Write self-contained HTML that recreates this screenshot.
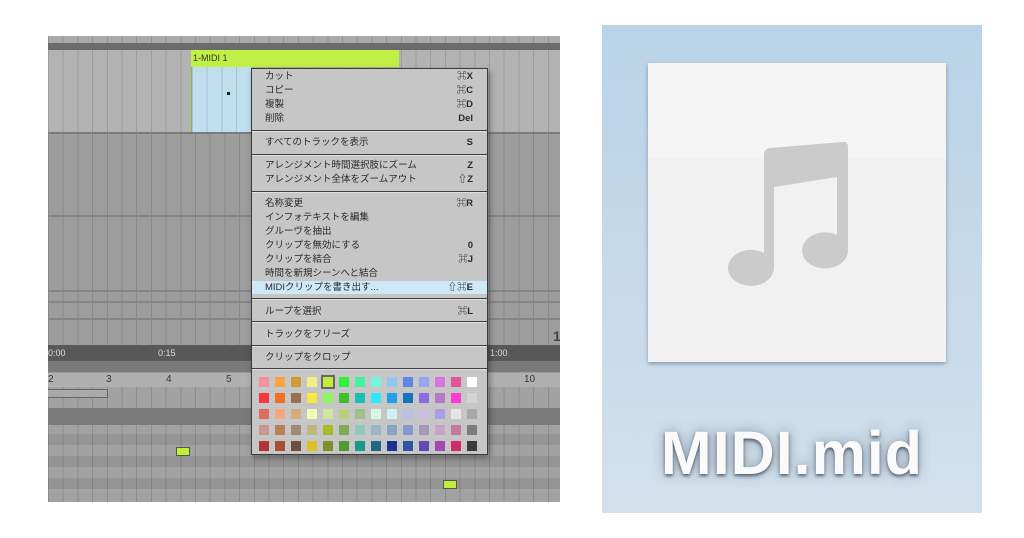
<!DOCTYPE html>
<html><head><meta charset="utf-8"><style>
*{margin:0;padding:0;box-sizing:border-box}
body{width:1024px;height:538px;background:#fff;position:relative;overflow:hidden;font-family:"Liberation Sans","Noto Sans CJK JP",sans-serif}
.a{position:absolute}
.grid{background-image:repeating-linear-gradient(90deg,rgba(0,0,0,.13) 0 1px,transparent 1px 14.7px)}
.menu{left:251px;top:68px;width:237px;height:387px;background:#c6c6c6;border:1.5px solid #3a3a3a;box-shadow:2px 3px 6px rgba(0,0,0,.35);font-size:9.5px;color:#2a2a2a}
.it{position:absolute;left:13px;right:14px;height:14px;line-height:14px}
.it span{position:absolute;right:0;font-weight:bold}
.sep{position:absolute;left:0;right:0;height:2px;background:#3e3e3e;border-bottom:1px solid #e0e0e0}
.sw{position:absolute;width:10px;height:10px}
</style></head><body>
<!-- left panel -->
<div class="a" style="left:48px;top:36px;width:512px;height:466px;background:#9c9c9c;overflow:hidden">
 <div class="a grid" style="left:0;top:0;width:512px;height:7px;background-color:#a9a9a9"></div>
 <div class="a" style="left:0;top:7px;width:512px;height:7px;background:#6b6b6b"></div>
 <div class="a grid" style="left:0;top:14px;width:512px;height:82px;background-color:#b3b3b3"></div>
 <div class="a" style="left:0;top:96px;width:512px;height:2px;background:#7c7c7c"></div>
 <div class="a grid" style="left:0;top:98px;width:512px;height:211px;background-color:#9d9d9d"></div>
 <div class="a" style="left:0;top:179px;width:512px;height:2px;background:#858585"></div>
 <div class="a" style="left:0;top:254px;width:512px;height:2px;background:#858585"></div>
 <div class="a" style="left:0;top:265px;width:512px;height:2px;background:#858585"></div>
 <div class="a" style="left:0;top:282px;width:512px;height:2px;background:#858585"></div>
 <div class="a" style="left:505px;top:292px;font-size:14px;font-weight:bold;color:#444">1</div>
 <div class="a" style="left:0;top:309px;width:512px;height:16px;background:#585858;color:#ddd;font-size:9px;line-height:16px">
  <span class="a" style="left:0">0:00</span><span class="a" style="left:110px">0:15</span><span class="a" style="left:442px">1:00</span></div>
 <div class="a" style="left:0;top:325px;width:512px;height:11px;background:#7a7a7a"></div>
 <div class="a" style="left:0;top:337px;width:512px;height:14px;background:#b0b0b0;font-size:10px;color:#333;line-height:14px">
  <span class="a" style="left:0">2</span><span class="a" style="left:58px">3</span><span class="a" style="left:118px">4</span><span class="a" style="left:178px">5</span><span class="a" style="left:476px">10</span></div>
 <div class="a grid" style="left:0;top:351px;width:512px;height:21px;background-color:#a2a2a2"></div>
 <div class="a" style="left:0;top:353px;width:60px;height:9px;background:#aaa;border:1px solid #666;border-left:none"></div>
 <div class="a" style="left:0;top:372px;width:512px;height:17px;background:#7a7a7a"></div>
 <div class="a grid" style="left:0;top:389px;width:512px;height:77px;background-color:#a2a2a2"></div>
 <div class="a" style="left:0;top:398px;width:512px;height:11px;background:rgba(0,0,0,.08)"></div>
 <div class="a" style="left:0;top:420px;width:512px;height:11px;background:rgba(0,0,0,.08)"></div>
 <div class="a" style="left:0;top:442px;width:512px;height:11px;background:rgba(0,0,0,.08)"></div>
 <div class="a" style="left:128px;top:411px;width:14px;height:9px;background:#c0ec3a;border:1px solid #555"></div>
 <div class="a" style="left:395px;top:444px;width:14px;height:9px;background:#c0ec3a;border:1px solid #555"></div>
 <!-- clip -->
 <div class="a" style="left:143px;top:14px;width:208px;height:17px;background:#c0ef45;font-size:9px;line-height:17px;padding-left:2px;color:#333">1-MIDI 1</div>
 <div class="a" style="left:143px;top:31px;width:60px;height:65px;background:#bfdeee;border-left:1px solid #8ab838;background-image:repeating-linear-gradient(90deg,rgba(0,0,0,.12) 0 1px,transparent 1px 14.7px)"></div>
 <div class="a" style="left:179px;top:56px;width:3px;height:3px;background:#222"></div>
</div>
<!-- menu -->
<div class="a menu">
 <div class="it" style="top:1px">カット<span>⌘X</span></div>
 <div class="it" style="top:15px">コピー<span>⌘C</span></div>
 <div class="it" style="top:29px">複製<span>⌘D</span></div>
 <div class="it" style="top:43px">削除<span>Del</span></div>
 <div class="sep" style="top:61px"></div>
 <div class="it" style="top:67px">すべてのトラックを表示<span>S</span></div>
 <div class="sep" style="top:85px"></div>
 <div class="it" style="top:90px">アレンジメント時間選択肢にズーム<span>Z</span></div>
 <div class="it" style="top:104px">アレンジメント全体をズームアウト<span>⇧Z</span></div>
 <div class="sep" style="top:122px"></div>
 <div class="it" style="top:128px">名称変更<span>⌘R</span></div>
 <div class="it" style="top:142px">インフォテキストを編集</div>
 <div class="it" style="top:156px">グルーヴを抽出</div>
 <div class="it" style="top:170px">クリップを無効にする<span>0</span></div>
 <div class="it" style="top:184px">クリップを結合<span>⌘J</span></div>
 <div class="it" style="top:198px">時間を新規シーンへと結合</div>
 <div class="a" style="left:0;right:0;top:212px;height:13px;background:#cde8f6"></div>
 <div class="it" style="top:212px">MIDIクリップを書き出す...<span>⇧⌘E</span></div>
 <div class="sep" style="top:229px"></div>
 <div class="it" style="top:236px">ループを選択<span>⌘L</span></div>
 <div class="sep" style="top:252px"></div>
 <div class="it" style="top:259px">トラックをフリーズ</div>
 <div class="sep" style="top:276px"></div>
 <div class="it" style="top:282px">クリップをクロップ</div>
 <div class="sep" style="top:299px"></div>
 <div id="pal"></div>
</div>
<script>
var c=[["#f4909f","#f9a33c","#cf9a35","#f3ee7f","#c0ec3a","#33f23c","#3ef59e","#6ff5e2","#94c6f5","#5a86e6","#95a6f7","#d872e0","#e2539c","#ffffff"],
["#f43a3e","#f2701f","#98704c","#fbe93f","#8ef862","#42c02c","#1bbfaf","#2ee8fb","#22a1eb","#1473bf","#8a6de0","#b878c9","#fb3ad3","#d4d4d4"],
["#e06c5f","#f9a57a","#d5ac7c","#eefcb6","#d2e59c","#bbcf78","#9ec189","#d6f8e2","#cff1f6","#b9c2e4","#ccbde6","#ad9ee8","#e4e4e4","#a9a9a9"],
["#c99892","#b98057","#a08a72","#c0b87a","#a6be24","#7fac52","#8fcbbd","#9db3c7","#86a4c1","#8798d1","#a596ba","#c7a1c9","#c47a9b","#7d7d7d"],
["#b13638","#a6512f","#704f3d","#dcc127","#82902c","#509a34","#179a8c","#226684","#1b3393","#2f54a2","#634ab2","#a24ab1","#ce2b6d","#3c3c3c"]];
var h="";for(var r=0;r<5;r++)for(var i=0;i<14;i++){h+='<div class="sw" style="left:'+(7+i*16)+'px;top:'+(308+r*16)+'px;background:'+c[r][i]+(r==0&&i==4?';outline:2px solid #666':'')+'"></div>';}
document.getElementById("pal").innerHTML=h;
</script>
<!-- right panel -->
<div class="a" style="left:602px;top:25px;width:380px;height:488px;background:linear-gradient(180deg,#b9d3e8 0%,#c8dbea 60%,#d3e1ec 100%)"></div>
<div class="a" style="left:648px;top:63px;width:298px;height:299px;background:#f1f1f1;box-shadow:0 2px 4px rgba(60,70,90,.45)">
 <div class="a" style="left:0;top:0;width:298px;height:95px;background:#f5f5f5"></div>
 <svg class="a" style="left:0;top:0" width="298" height="299" viewBox="0 0 298 299">
  <path fill="#cbcbcb" d="M116 92 Q116 86 122 85 L194 79 Q200 78 200 84 L200 186 A23 18 0 1 1 189 172 L189 114 L126 124 L126 205 A23 18 0 1 1 116 190 Z"/>
 </svg>
</div>
<div class="a" style="left:602px;top:418px;width:380px;text-align:center;font-size:61px;font-weight:bold;color:#fafafa;letter-spacing:1px;text-shadow:0 2px 3px rgba(40,50,70,.7),0 0 12px rgba(60,70,90,.45)">MIDI.mid</div>
</body></html>
